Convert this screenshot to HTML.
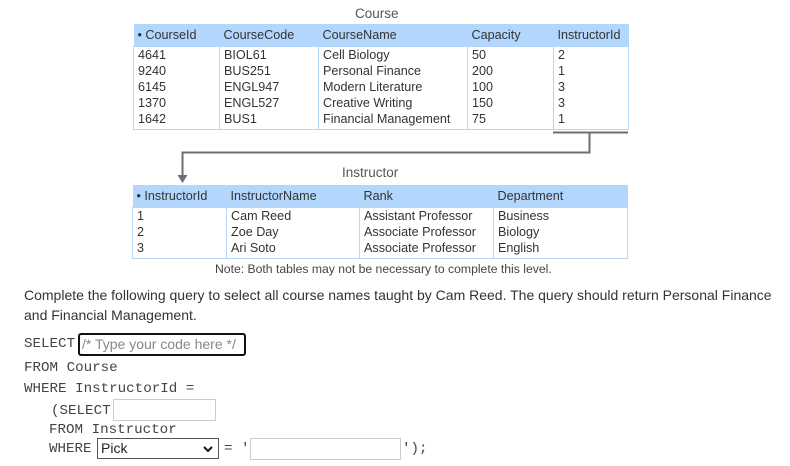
<!DOCTYPE html><html><head><style>
body{margin:0;width:790px;height:466px;background:#fff;font-family:"Liberation Sans",sans-serif;color:#333;position:relative;overflow:hidden}
.a{position:absolute;white-space:nowrap}
table{position:absolute;border-collapse:collapse;font-size:12.6px;color:#333;table-layout:fixed}
td,th{padding:0 0 0 4px;text-align:left;font-weight:normal;vertical-align:top;overflow:hidden}
th{background:#b3d7fc;height:22px;line-height:22px}
td{line-height:16px;border-left:1px solid #b3d7fc;border-right:1px solid #b3d7fc}
tbody{border:1px solid #b3d7fc}
.t{color:#555;font-size:13.5px}
.c{font-family:"Liberation Mono",monospace;font-size:14.2px;color:#444;line-height:16px}
.in{position:absolute;border:1px solid #ccc;background:#fff}
</style></head><body>
<div class="a t" style="left:355px;top:6px">Course</div>
<table style="left:133px;top:24px;width:495px">
<colgroup><col style="width:86px"><col style="width:99px"><col style="width:149px"><col style="width:86px"><col style="width:75px"></colgroup>
<thead><tr><th>• CourseId</th><th>CourseCode</th><th>CourseName</th><th>Capacity</th><th>InstructorId</th></tr></thead>
<tbody>
<tr><td>4641</td><td>BIOL61</td><td>Cell Biology</td><td>50</td><td>2</td></tr>
<tr><td>9240</td><td>BUS251</td><td>Personal Finance</td><td>200</td><td>1</td></tr>
<tr><td>6145</td><td>ENGL947</td><td>Modern Literature</td><td>100</td><td>3</td></tr>
<tr><td>1370</td><td>ENGL527</td><td>Creative Writing</td><td>150</td><td>3</td></tr>
<tr><td style="height:18px">1642</td><td>BUS1</td><td>Financial Management</td><td>75</td><td>1</td></tr>
</tbody></table>
<svg class="a" style="left:0;top:0" width="790" height="190"><path d="M553 132.5H628M589.5 132V152.5H182.5V176" fill="none" stroke="#6b6e73" stroke-width="2"/><path d="M177.5 175L182.5 183L187.5 175Z" fill="#6b6e73"/></svg>
<div class="a t" style="left:342px;top:165px">Instructor</div>
<table style="left:132px;top:185px;width:495px">
<colgroup><col style="width:94px"><col style="width:133px"><col style="width:134px"><col style="width:134px"></colgroup>
<thead><tr><th>• InstructorId</th><th>InstructorName</th><th>Rank</th><th>Department</th></tr></thead>
<tbody>
<tr><td>1</td><td>Cam Reed</td><td>Assistant Professor</td><td>Business</td></tr>
<tr><td>2</td><td>Zoe Day</td><td>Associate Professor</td><td>Biology</td></tr>
<tr><td style="height:18px">3</td><td>Ari Soto</td><td>Associate Professor</td><td>English</td></tr>
</tbody></table>
<div class="a" style="left:215px;top:262px;font-size:12.2px;color:#444">Note: Both tables may not be necessary to complete this level.</div>
<div class="a" style="left:24px;top:285px;font-size:14px;line-height:20px;color:#333;white-space:normal;width:760px">Complete the following query to select all course names taught by Cam Reed. The query should return Personal Finance and Financial Management.</div>
<div class="a c" style="left:24px;top:336px">SELECT</div>
<div class="a" style="left:78px;top:333px;width:162px;height:19px;border:2px solid #111;border-radius:3px;font-size:14px;color:#888;line-height:19px;padding-left:2px;box-sizing:content-box">/* Type your code here */</div>
<div class="a c" style="left:24px;top:360px">FROM Course</div>
<div class="a c" style="left:24px;top:381px">WHERE InstructorId =</div>
<div class="a c" style="left:51px;top:403px">(SELECT</div>
<div class="in" style="left:113px;top:399px;width:101px;height:20px"></div>
<div class="a c" style="left:49px;top:422px">FROM Instructor</div>
<div class="a c" style="left:49px;top:441px">WHERE</div>
<div class="a" style="left:97px;top:438px;font-size:14px;line-height:19px;color:#222;padding-left:3px;box-sizing:border-box;width:122px;height:21px;border:1px solid #555">Pick<svg style="position:absolute;right:5px;top:6px" width="10" height="8"><path d="M1 2L5 6L9 2" fill="none" stroke="#111" stroke-width="2"/></svg></div>
<div class="a c" style="left:224px;top:441px">= '</div>
<div class="in" style="left:250px;top:438px;width:149px;height:20px"></div>
<div class="a c" style="left:402px;top:441px">');</div>
</body></html>
